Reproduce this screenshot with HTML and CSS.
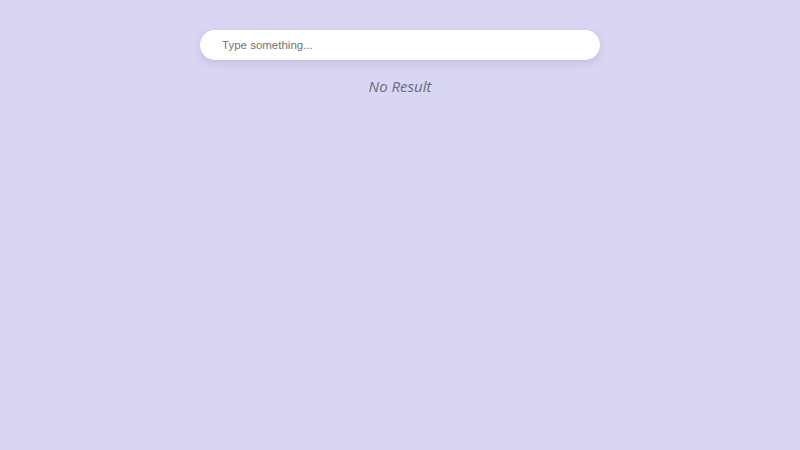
FILE: index.html
```html
<!DOCTYPE html>
<html>
<head>
<meta charset="utf-8">
<link rel="stylesheet" href="styles.css">
</head>
<body>
<div class="page">
  <input class="search" type="text" placeholder="Type something...">
  <p class="result">No Result</p>
</div>
</body>
</html>
```
FILE: styles.css
```css
html, body {
  margin: 0;
  height: 100%;
  background: #d9d6f3;
}
.page {
  display: flex;
  flex-direction: column;
  align-items: center;
  padding-top: 30px;
}
.search {
  box-sizing: border-box;
  width: 400px;
  height: 30px;
  border: none;
  outline: none;
  border-radius: 15px;
  background: #fff;
  padding: 0 22px;
  font-family: "Liberation Sans", Arial, sans-serif;
  font-size: 11.5px;
  color: #333;
  box-shadow: 0 3px 8px rgba(60, 50, 120, 0.15);
}
.search::placeholder {
  color: #737373;
}
.result {
  margin: 15px 0 0;
  font-family: "Open Sans", sans-serif;
  font-style: italic;
  font-size: 15px;
  line-height: 22px;
  color: #6b6a7e;
}
```
